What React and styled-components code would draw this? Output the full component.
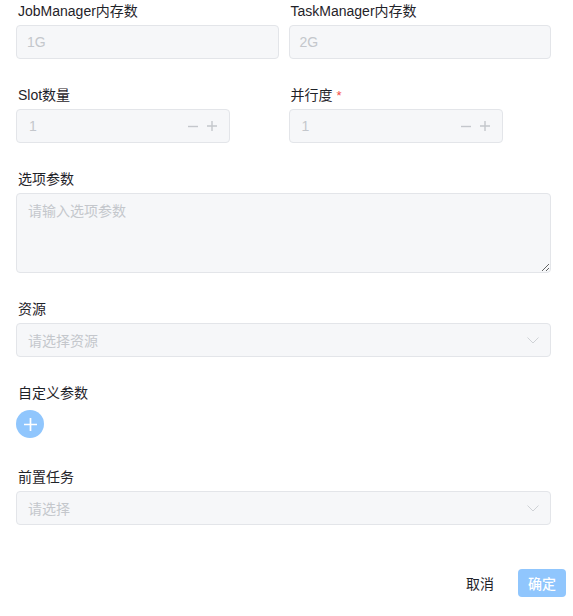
import React from "react";
import styled, { createGlobalStyle } from "styled-components";

const GlobalStyle = createGlobalStyle`
  html, body {
    margin: 0;
    padding: 0;
    background: #ffffff;
  }
  body {
    font-family: "Liberation Sans", "Noto Sans CJK SC", sans-serif;
    font-size: 14px;
    color: #1f2329;
    -webkit-font-smoothing: antialiased;
  }
  * { box-sizing: border-box; }
`;

const Page = styled.div`
  width: 573px;
  height: 616px;
  display: flex;
  flex-direction: column;
`;

const Form = styled.div`
  padding: 0 22px 0 16px;
  display: flex;
  flex-direction: column;
`;

const Row = styled.div`
  display: grid;
  grid-template-columns: 1fr 1fr;
  column-gap: 10px;
`;

const FormItem = styled.div`
  display: flex;
  flex-direction: column;
  margin-bottom: 25px;
`;

const Label = styled.div`
  height: 22px;
  line-height: 22px;
  margin-bottom: 3px;
  padding-left: 2px;
  font-size: 14px;
  color: #1f2329;
  white-space: nowrap;
`;

const Required = styled.span`
  color: #f54a45;
  margin-left: 4px;
  font-size: 13px;
`;

const fieldBase = `
  background: #f6f7f9;
  border: 1px solid #e3e5e9;
  border-radius: 4px;
  color: #c4c7cc;
  font-family: "Liberation Sans", "Noto Sans CJK SC", sans-serif;
  font-size: 14px;
`;

const TextInput = styled.div`
  ${fieldBase}
  height: 34px;
  display: flex;
  align-items: center;
  padding: 0 ${(p) => p.$pad || 10}px;
  width: ${(p) => (p.$width ? `${p.$width}px` : "100%")};
`;

const InputText = styled.span`
  flex: 1;
  white-space: nowrap;
`;

const Steppers = styled.div`
  display: flex;
  align-items: center;
  gap: 9px;
  color: #c4c7cc;
`;

const TextArea = styled.textarea`
  ${fieldBase}
  display: block;
  width: 100%;
  height: 80px;
  padding: 7px 11px;
  line-height: 21px;
  resize: vertical;
  outline: none;
  &::placeholder {
    color: #c4c7cc;
  }
`;

const AddArea = styled.div`
  height: 34px;
  display: flex;
  align-items: center;
`;

const AddButton = styled.div`
  width: 28px;
  height: 28px;
  border-radius: 50%;
  background: #90c6fd;
  display: flex;
  align-items: center;
  justify-content: center;
`;

const Footer = styled.div`
  display: flex;
  justify-content: flex-end;
  align-items: center;
  gap: 14px;
  padding: 19px 7px 0 0;
`;

const Button = styled.div`
  height: 28px;
  padding: 0 10px;
  border-radius: 4px;
  display: flex;
  align-items: center;
  font-size: 14px;
  font-family: "Noto Sans CJK SC", sans-serif;
  background: ${(p) => (p.$primary ? "#90c6fd" : "transparent")};
  color: ${(p) => (p.$primary ? "#ffffff" : "#1f2329")};
  font-weight: ${(p) => (p.$primary ? 500 : 400)};
`;

const MinusIcon = () => (
  <svg width="10" height="10" viewBox="0 0 10 10">
    <path d="M0 5.5H10" stroke="currentColor" strokeWidth="1.4" />
  </svg>
);

const PlusIcon = ({ size = 10, color = "currentColor", width = 1.4 }) => (
  <svg width={size} height={size} viewBox="0 0 10 10">
    <path d="M0 5H10M5 0V10" stroke={color} strokeWidth={width} />
  </svg>
);

const Chevron = () => (
  <svg width="12" height="7" viewBox="0 0 12 7">
    <path d="M0.5 0.5L6 6L11.5 0.5" fill="none" stroke="#cfd2d6" strokeWidth="1" />
  </svg>
);

const NumberInput = ({ value }) => (
  <TextInput $width={214} $pad={12}>
    <InputText>{value}</InputText>
    <Steppers>
      <MinusIcon />
      <PlusIcon />
    </Steppers>
  </TextInput>
);

const Select = ({ placeholder }) => (
  <TextInput $pad={11}>
    <InputText>{placeholder}</InputText>
    <Chevron />
  </TextInput>
);

export default function App() {
  return (
    <Page>
      <GlobalStyle />
      <Form>
        <Row>
          <FormItem>
            <Label>JobManager内存数</Label>
            <TextInput>
              <InputText>1G</InputText>
            </TextInput>
          </FormItem>
          <FormItem>
            <Label>TaskManager内存数</Label>
            <TextInput>
              <InputText>2G</InputText>
            </TextInput>
          </FormItem>
        </Row>
        <Row>
          <FormItem>
            <Label>Slot数量</Label>
            <NumberInput value="1" />
          </FormItem>
          <FormItem>
            <Label>
              并行度<Required>*</Required>
            </Label>
            <NumberInput value="1" />
          </FormItem>
        </Row>
        <FormItem>
          <Label>选项参数</Label>
          <TextArea placeholder="请输入选项参数" readOnly />
        </FormItem>
        <FormItem>
          <Label>资源</Label>
          <Select placeholder="请选择资源" />
        </FormItem>
        <FormItem>
          <Label>自定义参数</Label>
          <AddArea>
            <AddButton>
              <PlusIcon size={13} color="#ffffff" width={1.3} />
            </AddButton>
          </AddArea>
        </FormItem>
        <FormItem>
          <Label>前置任务</Label>
          <Select placeholder="请选择" />
        </FormItem>
      </Form>
      <Footer>
        <Button>取消</Button>
        <Button $primary>确定</Button>
      </Footer>
    </Page>
  );
}
